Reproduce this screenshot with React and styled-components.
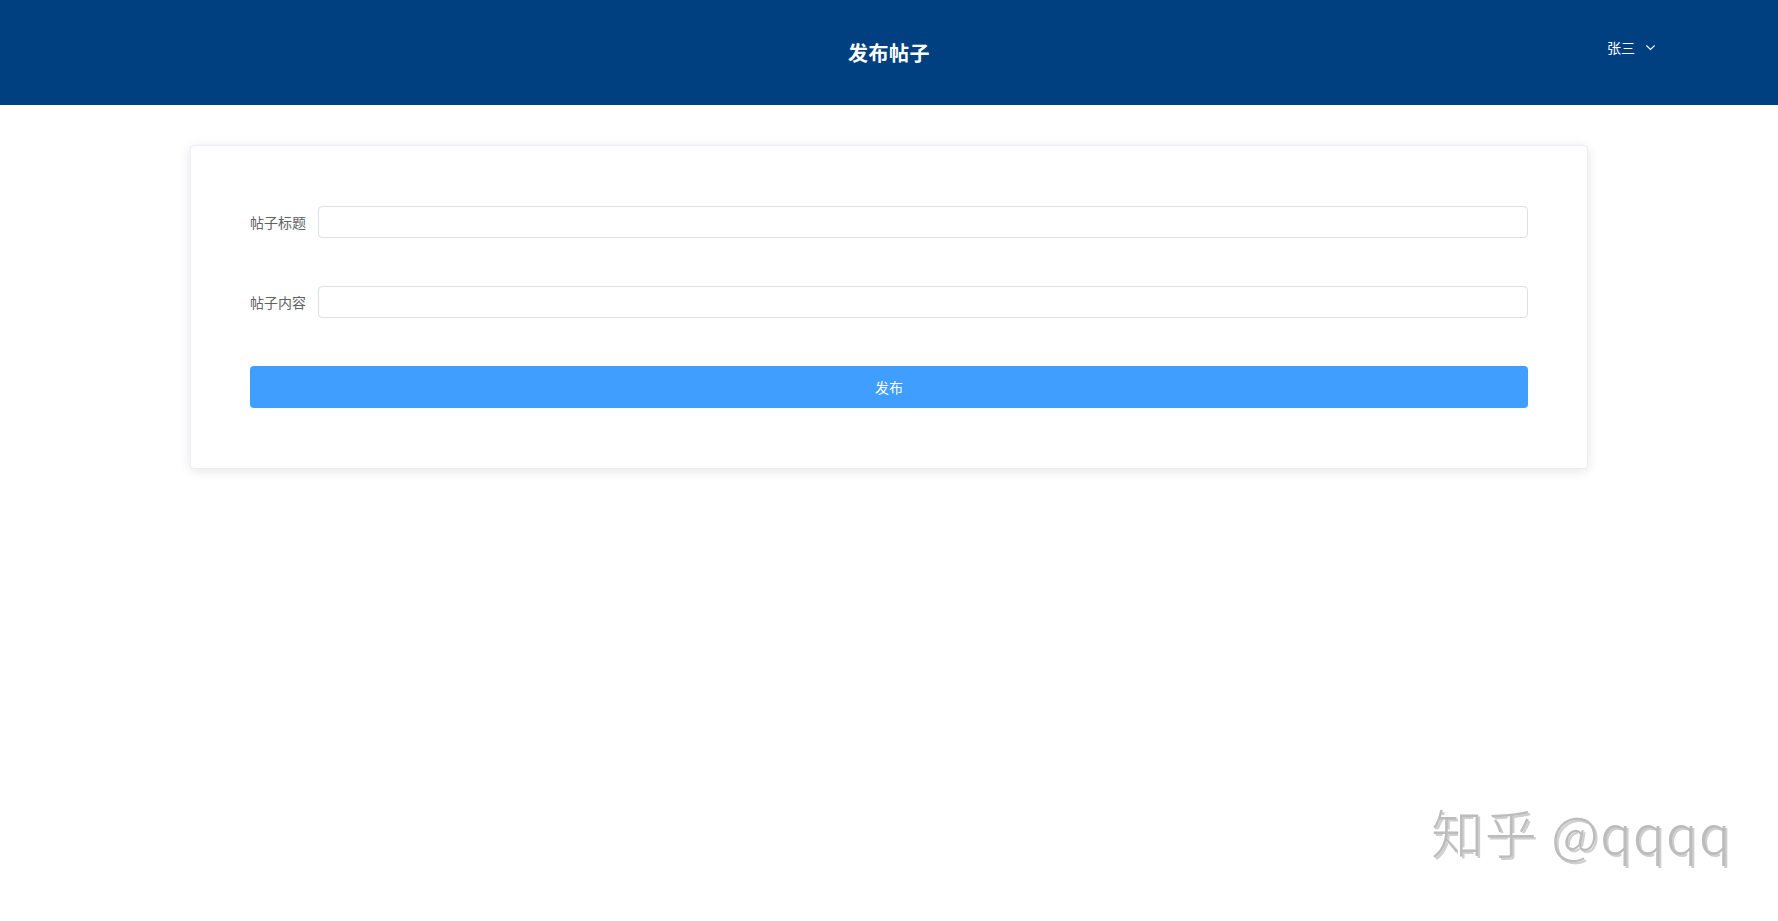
import React from 'react';
import styled, { createGlobalStyle } from 'styled-components';

const GlobalStyle = createGlobalStyle`
  html, body {
    margin: 0;
    padding: 0;
    background: #fff;
    font-family: "Noto Sans CJK SC", "Noto Sans", sans-serif;
  }
`;

const Page = styled.div`
  min-height: 921px;
  position: relative;
`;

const Header = styled.header`
  height: 105px;
  background: #004080;
  display: grid;
  grid-template-columns: 1fr auto 1fr;
  align-items: center;
  color: #fff;
`;

const Title = styled.h1`
  grid-column: 2;
  margin: 0;
  font-size: 20px;
  font-weight: 700;
  letter-spacing: 0.5px;
`;

const UserMenu = styled.div`
  grid-column: 3;
  justify-self: end;
  align-self: start;
  margin-top: 37px;
  margin-right: 122px;
  display: flex;
  align-items: center;
  gap: 10px;
  font-size: 14px;
  line-height: 20px;
  cursor: pointer;
`;

const Card = styled.div`
  width: 1398px;
  box-sizing: border-box;
  margin: 40px auto 0;
  padding: 60px 59px 60px;
  background: #fff;
  border: 1px solid #ebeef5;
  border-radius: 4px;
  box-shadow: 0 2px 12px 0 rgba(0, 0, 0, 0.1);
  display: flex;
  flex-direction: column;
`;

const FormRow = styled.div`
  display: flex;
  align-items: center;
  margin-bottom: ${({ gap }) => gap}px;
`;

const Label = styled.label`
  width: 68px;
  flex-shrink: 0;
  padding-right: 12px;
  box-sizing: border-box;
  text-align: right;
  font-size: 14px;
  color: #606266;
  white-space: nowrap;
`;

const Input = styled.input`
  flex: 1;
  height: 32px;
  box-sizing: border-box;
  border: 1px solid #dcdfe6;
  border-radius: 4px;
  padding: 0 15px;
  font-size: 14px;
  color: #606266;
  outline: none;
  font-family: inherit;
`;

const SubmitButton = styled.button`
  height: 42px;
  border: none;
  border-radius: 4px;
  background: #409eff;
  color: #fff;
  font-size: 14px;
  font-family: inherit;
  cursor: pointer;
`;

const Watermark = styled.div`
  position: absolute;
  right: 46px;
  top: 806px;
  font-size: 52px;
  font-weight: 300;
  line-height: 1;
  color: #bcbcbc;
  letter-spacing: 1.5px;
  text-shadow: -2px -2px 0 #ffffff, 2px 2px 0 #cfcfcf;
  pointer-events: none;
  white-space: nowrap;
`;

const Chevron = () => (
  <svg width="11" height="11" viewBox="0 0 12 12" fill="none">
    <path d="M1.5 3.8 L6 8.2 L10.5 3.8" stroke="#fff" strokeWidth="1.2" />
  </svg>
);

export default function App() {
  return (
    <Page>
      <GlobalStyle />
      <Header>
        <Title>发布帖子</Title>
        <UserMenu>
          <span>张三</span>
          <Chevron />
        </UserMenu>
      </Header>
      <Card>
        <FormRow gap={48}>
          <Label>帖子标题</Label>
          <Input type="text" />
        </FormRow>
        <FormRow gap={48}>
          <Label>帖子内容</Label>
          <Input type="text" />
        </FormRow>
        <SubmitButton>发布</SubmitButton>
      </Card>
      <Watermark>知乎 @qqqq</Watermark>
    </Page>
  );
}
